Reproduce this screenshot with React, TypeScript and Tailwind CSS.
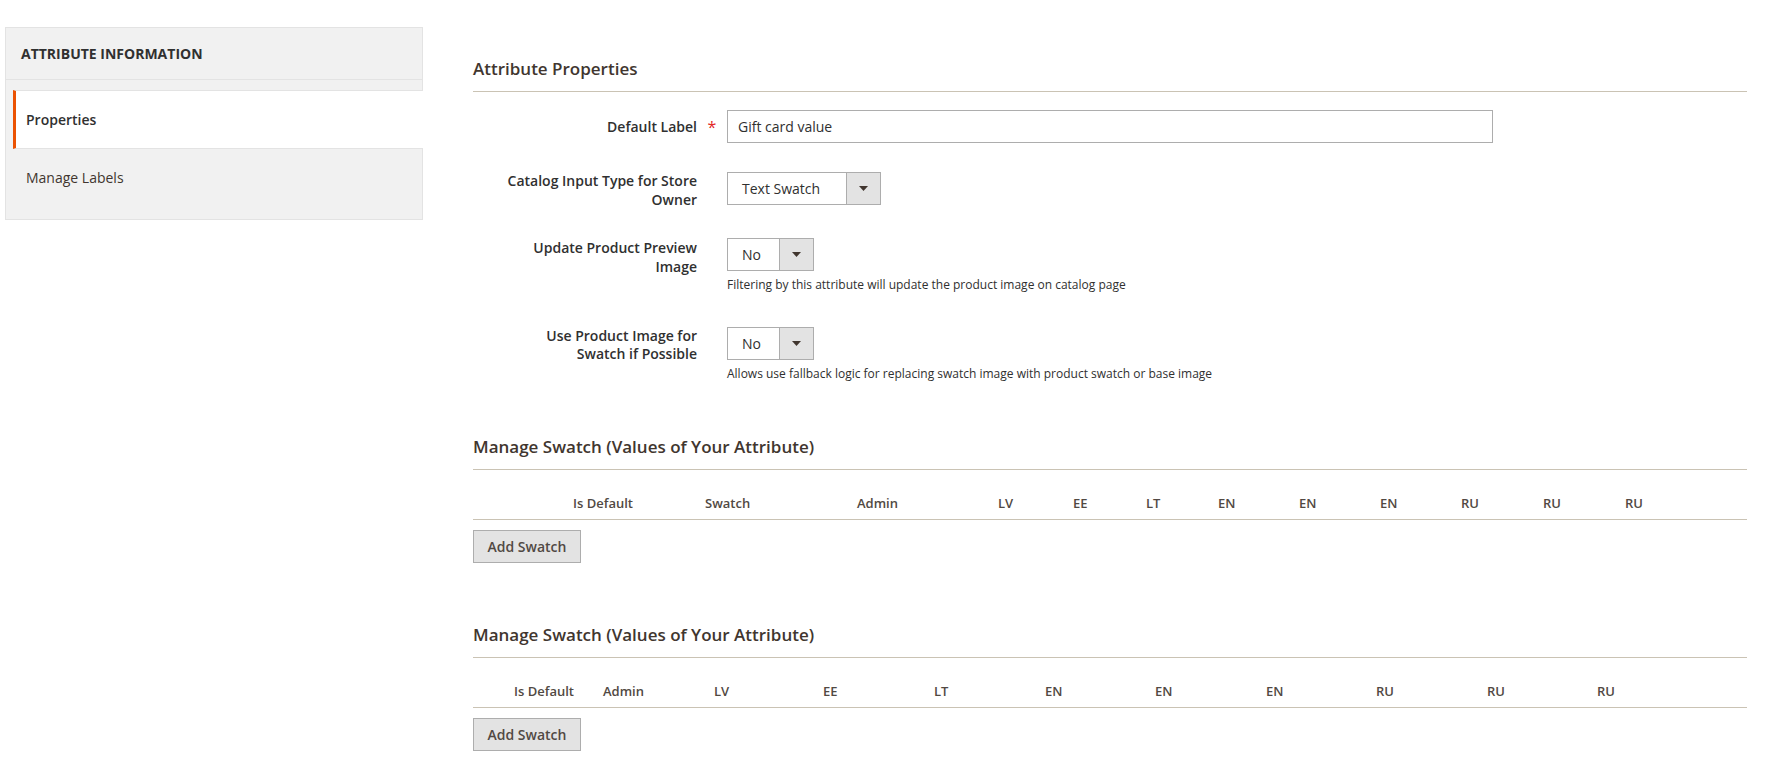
const font = { fontFamily: '"Open Sans", "Liberation Sans", sans-serif' }

const swatchCols1 = [
  { label: '', w: 'w-[100px]' },
  { label: 'Is Default', w: 'w-[132px]' },
  { label: 'Swatch', w: 'w-[152px]' },
  { label: 'Admin', w: 'w-[141px]' },
  { label: 'LV', w: 'w-[75px]' },
  { label: 'EE', w: 'w-[73px]' },
  { label: 'LT', w: 'w-[72px]' },
  { label: 'EN', w: 'w-[81px]' },
  { label: 'EN', w: 'w-[81px]' },
  { label: 'EN', w: 'w-[81px]' },
  { label: 'RU', w: 'w-[82px]' },
  { label: 'RU', w: 'w-[82px]' },
  { label: 'RU', w: 'flex-1' },
]

const swatchCols2 = [
  { label: '', w: 'w-[41px]' },
  { label: 'Is Default', w: 'w-[89px]' },
  { label: 'Admin', w: 'w-[111px]' },
  { label: 'LV', w: 'w-[109px]' },
  { label: 'EE', w: 'w-[111px]' },
  { label: 'LT', w: 'w-[111px]' },
  { label: 'EN', w: 'w-[110px]' },
  { label: 'EN', w: 'w-[111px]' },
  { label: 'EN', w: 'w-[110px]' },
  { label: 'RU', w: 'w-[111px]' },
  { label: 'RU', w: 'w-[110px]' },
  { label: 'RU', w: 'flex-1' },
]

function SectionTitle({ children, className = '' }: { children: string; className?: string }) {
  return (
    <div className={`border-b border-[#cac3b4] pb-[11px] ${className}`}>
      <h2 className="text-[17px] leading-[23px] font-semibold text-[#41362f]">{children}</h2>
    </div>
  )
}

function Select({ value, width }: { value: string; width: string }) {
  return (
    <div className={`flex h-[33px] ${width} border border-[#adadad] bg-white`}>
      <div className="flex-1 flex items-center pl-[14px] text-[14px] text-[#303030]">{value}</div>
      <div className="w-[34px] flex items-center justify-center bg-[#e3e3e3] border-l border-[#adadad]">
        <svg width="9" height="5" viewBox="0 0 9 5">
          <path d="M0 0 L9 0 L4.5 5 Z" fill="#41362f" />
        </svg>
      </div>
    </div>
  )
}

function SwatchTable({ cols }: { cols: { label: string; w: string }[] }) {
  return (
    <>
      <div className="flex border-b border-[#cac3b4] pt-[24px] pb-[6px]">
        {cols.map((c, i) => (
          <div key={i} className={`${c.w} text-[13px] leading-[19px] font-semibold text-[#514943]`}>
            {c.label}
          </div>
        ))}
      </div>
      <button className="mt-[10px] h-[33px] w-[108px] bg-[#e3e3e3] border border-[#adadad] text-[14px] font-semibold text-[#514943]">
        Add Swatch
      </button>
    </>
  )
}

export default function App() {
  return (
    <div className="flex w-full h-[777px] bg-white overflow-hidden text-[#303030]" style={font}>
      {/* Side tabs */}
      <div className="ml-[5px] mt-[27px] w-[418px] self-start border border-[#e3e3e3] bg-[#f1f1f1] pb-[13px]">
        <div className="h-[52px] flex items-center px-[15px] border-b border-[#e3e3e3]">
          <span className="text-[14px] font-bold uppercase text-[#303030]">Attribute Information</span>
        </div>
        <div className="mt-[10px] ml-[7px] -mr-px">
          <div className="h-[59px] flex items-center bg-white border-l-[3px] border-l-[#eb5202] border-y border-y-[#e3e3e3] pl-[10px]">
            <span className="text-[14px] font-semibold text-[#303030]">Properties</span>
          </div>
          <div className="h-[57px] flex items-center pl-[13px]">
            <span className="text-[14px] text-[#41362f]">Manage Labels</span>
          </div>
        </div>
      </div>

      {/* Main content */}
      <div className="ml-[50px] w-[1274px] pt-[57px]">
        <SectionTitle>Attribute Properties</SectionTitle>

        <div className="flex mt-[18px]">
          <label className="w-[224px] text-right pt-[7px] text-[14px] leading-[19px] font-semibold">Default Label</label>
          <span className="w-[30px] text-center pt-[8px] text-[16px] leading-[19px] text-[#e22626]">*</span>
          <div className="w-[766px] h-[33px] border border-[#adadad] flex items-center pl-[10px] text-[14px]">
            Gift card value
          </div>
        </div>

        <div className="flex mt-[29px]">
          <label className="w-[224px] -mt-px text-right pl-[10px] text-[14px] leading-[19px] font-semibold">
            Catalog Input Type for Store Owner
          </label>
          <span className="w-[30px]" />
          <Select value="Text Swatch" width="w-[154px]" />
        </div>

        <div className="flex mt-[29px]">
          <label className="w-[224px] text-right pl-[30px] text-[14px] leading-[19px] font-semibold">
            Update Product Preview Image
          </label>
          <span className="w-[30px]" />
          <div>
            <Select value="No" width="w-[87px]" />
            <p className="mt-[6px] text-[12px] leading-[16px]">
              Filtering by this attribute will update the product image on catalog page
            </p>
          </div>
        </div>

        <div className="flex mt-[34px]">
          <label className="w-[224px] text-right pl-[50px] text-[14px] leading-[18px] font-semibold">
            Use Product Image for Swatch if Possible
          </label>
          <span className="w-[30px]" />
          <div>
            <Select value="No" width="w-[87px]" />
            <p className="mt-[6px] text-[12px] leading-[16px]">
              Allows use fallback logic for replacing swatch image with product swatch or base image
            </p>
          </div>
        </div>

        <SectionTitle className="mt-[53px]">Manage Swatch (Values of Your Attribute)</SectionTitle>
        <SwatchTable cols={swatchCols1} />

        <SectionTitle className="mt-[60px]">Manage Swatch (Values of Your Attribute)</SectionTitle>
        <SwatchTable cols={swatchCols2} />
      </div>
    </div>
  )
}
